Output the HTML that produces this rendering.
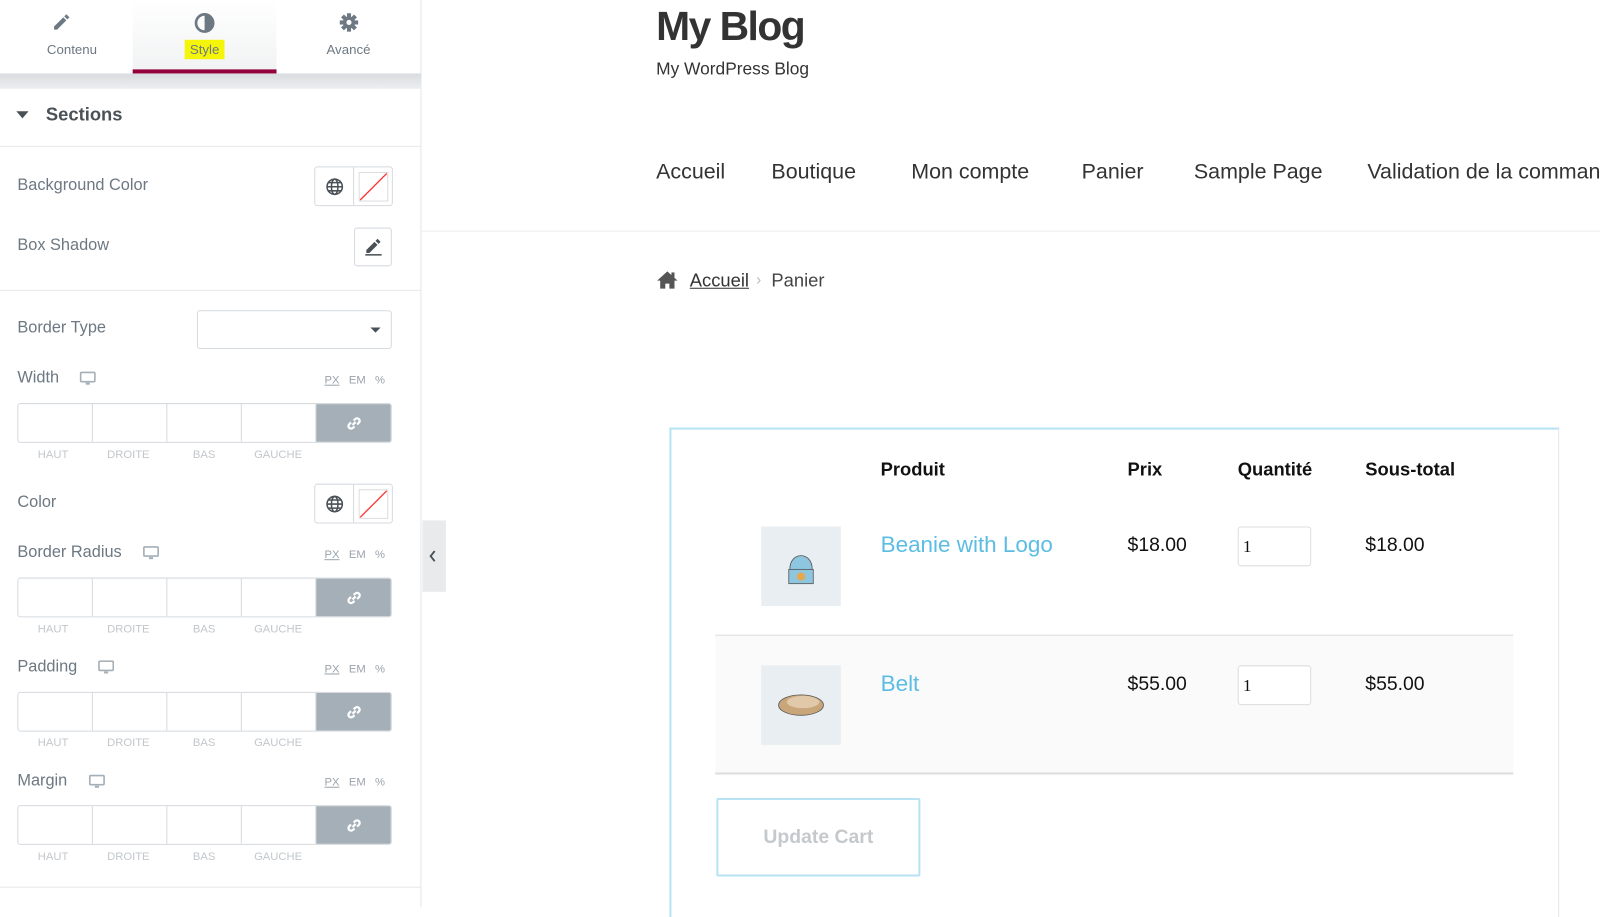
<!DOCTYPE html>
<html><head><meta charset="utf-8"><style>
*{box-sizing:border-box;margin:0;padding:0}
body{width:1600px;height:889px;overflow:hidden;background:#fff;font-family:"Liberation Sans",sans-serif;position:relative}
#w{position:absolute;left:0;top:0;width:1568px;height:872px;transform:scale(1.0204);transform-origin:0 0}
.a{position:absolute}
.side{left:0;top:0;width:413px;height:889px;background:#fff;border-right:1px solid #e3e5e8}
.tab{top:0;width:141px;height:72px;text-align:center;color:#6d7882;font-size:13px}
.tab .lb{position:absolute;top:41px;left:0;right:0}
.lbl{color:#6d7882;font-size:16px}
.hr{height:1px;background:#e6e8ea;left:0;width:413px}
.dim{left:17px;width:367px;height:39px;border:1px solid #d5dadf;border-radius:3px;display:flex;overflow:hidden}
.dim div{flex:1;border-right:1px solid #d5dadf}
.dim .lk{flex:0 0 73px;background:#a4afb7;border:none;display:flex;align-items:center;justify-content:center}
.sub{font-size:11px;color:#c2c7cc}
.unit{font-size:11px;color:#9aa3ab}
.gb{width:77px;height:39px;border:1px solid #d5dadf;border-radius:3px;display:flex}
.gb div{flex:1;display:flex;align-items:center;justify-content:center}
.nav{top:157px;font-size:21px;color:#333;white-space:nowrap}
.th{top:450px;font-size:18px;font-weight:bold;color:#111}
.td{font-size:19px;color:#111}
.qty{width:72px;height:39px;border:1px solid #ddd;border-radius:3px;font-family:"Liberation Serif",serif;font-size:17px;padding:9px 0 0 4px;color:#111;background:#fff}
</style></head><body><div id="w">
<div class="a side"></div>
<div class="a tab" style="left:0"><svg class="a" style="left:51px;top:13px" width="18" height="18" viewBox="0 0 18 18"><path d="M2 13l9-9 3 3-9 9H2z M12 3l2-2 3 3-2 2z" fill="#6d7882"/></svg><div class="lb">Contenu</div></div>
<div class="a tab" style="left:130px;background:linear-gradient(#fff,#f1f2f3)"><svg class="a" style="left:60px;top:12px" width="21" height="21" viewBox="0 0 20 20"><circle cx="10" cy="10" r="8" fill="none" stroke="#6d7882" stroke-width="2.5"/><path d="M10 2a8 8 0 0 1 0 16z" fill="#6d7882"/></svg><div class="lb"><span style="background:#f5f50a;padding:2px 5px;color:#6d7882">Style</span></div></div>
<div class="a" style="left:130px;top:68px;width:141px;height:4px;background:#93003c"></div>
<div class="a tab" style="left:271px"><svg class="a" style="left:61px;top:12px" width="20" height="20" viewBox="0 0 20 20"><g fill="#6d7882"><circle cx="10" cy="10" r="6"/><rect x="8" y="1" width="4" height="18"/><rect x="1" y="8" width="18" height="4"/><rect x="8" y="1" width="4" height="18" transform="rotate(45 10 10)"/><rect x="8" y="1" width="4" height="18" transform="rotate(-45 10 10)"/></g><circle cx="10" cy="10" r="2.5" fill="#fff"/></svg><div class="lb">Avancé</div></div>
<div class="a" style="left:0;top:72px;width:413px;height:15px;background:linear-gradient(#d9dcdf,#eceeef)"></div>
<div class="a" style="left:16px;top:109px;width:0;height:0;border-left:6px solid transparent;border-right:6px solid transparent;border-top:7px solid #495157"></div>
<div class="a" style="left:45px;top:102px;font-size:18px;font-weight:bold;color:#495157">Sections</div>
<div class="a hr" style="top:143px"></div>
<div class="a lbl" style="left:17px;top:173px">Background Color</div>
<div class="a gb" style="left:308px;top:163px"><div style="border-right:1px solid #d5dadf"><svg width="18" height="18" viewBox="0 0 18 18" fill="none" stroke="#495157" stroke-width="1.5"><circle cx="9" cy="9" r="7.5"/><ellipse cx="9" cy="9" rx="3.2" ry="7.5"/><path d="M1.5 9h15M2.8 5h12.4M2.8 13h12.4"/></svg></div><div><svg width="30" height="30"><rect x="1" y="1" width="28" height="28" fill="none" stroke="#ddd"/><path d="M2 28L28 2" stroke="#f33" stroke-width="1.3"/></svg></div></div>
<div class="a lbl" style="left:17px;top:232px">Box Shadow</div>
<div class="a" style="left:347px;top:223px;width:37px;height:38px;border:1px solid #d5dadf;border-radius:3px"><svg class="a" style="left:9px;top:8px" width="18" height="20" viewBox="0 0 18 20"><path d="M2 13l8-8 3 3-8 8H2z M11 4l2-2 3 3-2 2z" fill="#495157"/><rect x="1" y="17" width="16" height="1.5" fill="#495157"/></svg></div>
<div class="a hr" style="top:284px"></div>
<div class="a lbl" style="left:17px;top:313px">Border Type</div>
<div class="a" style="left:193px;top:304px;width:191px;height:38px;border:1px solid #d5dadf;border-radius:3px"><div class="a" style="left:169px;top:16px;border-left:5px solid transparent;border-right:5px solid transparent;border-top:5px solid #495157"></div></div>

<div class="a lbl" style="left:17px;top:362px">Width</div>
<svg class="a" style="left:78px;top:364px" width="16" height="14" viewBox="0 0 16 14"><rect x="1" y="1" width="14" height="9" rx="1" fill="none" stroke="#a4afb7" stroke-width="1.6"/><rect x="6" y="11" width="4" height="2" fill="#a4afb7"/></svg>
<div class="a unit" style="left:318px;top:367px"><u>PX</u>&nbsp;&nbsp;&nbsp;EM&nbsp;&nbsp;&nbsp;%</div>
<div class="a dim" style="top:395px"><div></div><div></div><div></div><div></div><div class="lk"><svg width="18" height="18" viewBox="0 0 18 18" fill="none" stroke="#fff" stroke-width="2.2"><path d="M7.5 10.5l3-3M6 8L4 10a2.5 2.5 0 0 0 3.5 3.5L9.5 12M12 10l2-2a2.5 2.5 0 0 0-3.5-3.5L8.5 6"/></svg></div></div>
<div class="a sub" style="left:37px;top:440px">HAUT</div><div class="a sub" style="left:105px;top:440px">DROITE</div><div class="a sub" style="left:189px;top:440px">BAS</div><div class="a sub" style="left:249px;top:440px">GAUCHE</div>

<div class="a lbl" style="left:17px;top:484px">Color</div>
<div class="a gb" style="left:308px;top:474px"><div style="border-right:1px solid #d5dadf"><svg width="18" height="18" viewBox="0 0 18 18" fill="none" stroke="#495157" stroke-width="1.5"><circle cx="9" cy="9" r="7.5"/><ellipse cx="9" cy="9" rx="3.2" ry="7.5"/><path d="M1.5 9h15M2.8 5h12.4M2.8 13h12.4"/></svg></div><div><svg width="30" height="30"><rect x="1" y="1" width="28" height="28" fill="none" stroke="#ddd"/><path d="M2 28L28 2" stroke="#f33" stroke-width="1.3"/></svg></div></div>

<div class="a lbl" style="left:17px;top:533px">Border Radius</div>
<svg class="a" style="left:140px;top:535px" width="16" height="14" viewBox="0 0 16 14"><rect x="1" y="1" width="14" height="9" rx="1" fill="none" stroke="#a4afb7" stroke-width="1.6"/><rect x="6" y="11" width="4" height="2" fill="#a4afb7"/></svg>
<div class="a unit" style="left:318px;top:538px"><u>PX</u>&nbsp;&nbsp;&nbsp;EM&nbsp;&nbsp;&nbsp;%</div>
<div class="a dim" style="top:566px"><div></div><div></div><div></div><div></div><div class="lk"><svg width="18" height="18" viewBox="0 0 18 18" fill="none" stroke="#fff" stroke-width="2.2"><path d="M7.5 10.5l3-3M6 8L4 10a2.5 2.5 0 0 0 3.5 3.5L9.5 12M12 10l2-2a2.5 2.5 0 0 0-3.5-3.5L8.5 6"/></svg></div></div>
<div class="a sub" style="left:37px;top:611px">HAUT</div><div class="a sub" style="left:105px;top:611px">DROITE</div><div class="a sub" style="left:189px;top:611px">BAS</div><div class="a sub" style="left:249px;top:611px">GAUCHE</div>

<div class="a lbl" style="left:17px;top:645px">Padding</div>
<svg class="a" style="left:96px;top:647px" width="16" height="14" viewBox="0 0 16 14"><rect x="1" y="1" width="14" height="9" rx="1" fill="none" stroke="#a4afb7" stroke-width="1.6"/><rect x="6" y="11" width="4" height="2" fill="#a4afb7"/></svg>
<div class="a unit" style="left:318px;top:650px"><u>PX</u>&nbsp;&nbsp;&nbsp;EM&nbsp;&nbsp;&nbsp;%</div>
<div class="a dim" style="top:678px"><div></div><div></div><div></div><div></div><div class="lk"><svg width="18" height="18" viewBox="0 0 18 18" fill="none" stroke="#fff" stroke-width="2.2"><path d="M7.5 10.5l3-3M6 8L4 10a2.5 2.5 0 0 0 3.5 3.5L9.5 12M12 10l2-2a2.5 2.5 0 0 0-3.5-3.5L8.5 6"/></svg></div></div>
<div class="a sub" style="left:37px;top:722px">HAUT</div><div class="a sub" style="left:105px;top:722px">DROITE</div><div class="a sub" style="left:189px;top:722px">BAS</div><div class="a sub" style="left:249px;top:722px">GAUCHE</div>

<div class="a lbl" style="left:17px;top:757px">Margin</div>
<svg class="a" style="left:87px;top:759px" width="16" height="14" viewBox="0 0 16 14"><rect x="1" y="1" width="14" height="9" rx="1" fill="none" stroke="#a4afb7" stroke-width="1.6"/><rect x="6" y="11" width="4" height="2" fill="#a4afb7"/></svg>
<div class="a unit" style="left:318px;top:761px"><u>PX</u>&nbsp;&nbsp;&nbsp;EM&nbsp;&nbsp;&nbsp;%</div>
<div class="a dim" style="top:789px"><div></div><div></div><div></div><div></div><div class="lk"><svg width="18" height="18" viewBox="0 0 18 18" fill="none" stroke="#fff" stroke-width="2.2"><path d="M7.5 10.5l3-3M6 8L4 10a2.5 2.5 0 0 0 3.5 3.5L9.5 12M12 10l2-2a2.5 2.5 0 0 0-3.5-3.5L8.5 6"/></svg></div></div>
<div class="a sub" style="left:37px;top:834px">HAUT</div><div class="a sub" style="left:105px;top:834px">DROITE</div><div class="a sub" style="left:189px;top:834px">BAS</div><div class="a sub" style="left:249px;top:834px">GAUCHE</div>
<div class="a hr" style="top:869px"></div>

<div class="a" style="left:414px;top:510px;width:23px;height:70px;background:#e8eaec"><svg class="a" style="left:6px;top:29px" width="8" height="12" viewBox="0 0 8 12"><path d="M6 1L2 6l4 5" fill="none" stroke="#495157" stroke-width="1.8"/></svg></div>

<div class="a" style="left:643px;top:4px;font-size:40px;font-weight:bold;color:#333;letter-spacing:-1.5px">My Blog</div>
<div class="a" style="left:643px;top:58px;font-size:17px;color:#333">My WordPress Blog</div>
<div class="a nav" style="left:643px">Accueil</div>
<div class="a nav" style="left:756px">Boutique</div>
<div class="a nav" style="left:893px">Mon compte</div>
<div class="a nav" style="left:1060px">Panier</div>
<div class="a nav" style="left:1170px">Sample Page</div>
<div class="a nav" style="left:1340px">Validation de la commande</div>
<div class="a" style="left:413px;top:226px;width:1187px;height:1px;background:#eee"></div>
<svg class="a" style="left:643px;top:265px" width="22" height="18" viewBox="0 0 22 18"><path d="M11 1L1 10h3v8h5v-5h4v5h5v-8h3z" fill="#555"/><rect x="15" y="2" width="3" height="5" fill="#555"/></svg>
<div class="a" style="left:676px;top:265px;font-size:18px;color:#333;text-decoration:underline">Accueil</div>
<div class="a" style="left:741px;top:266px;font-size:15px;color:#bbb">›</div>
<div class="a" style="left:756px;top:265px;font-size:18px;color:#444">Panier</div>

<div class="a" style="left:656px;top:419px;width:872px;height:480px;border:2px solid #b7e3f5;border-right:1px solid #e6e6e6;border-bottom:none"></div>
<div class="a th" style="left:863px">Produit</div>
<div class="a th" style="left:1105px">Prix</div>
<div class="a th" style="left:1213px">Quantité</div>
<div class="a th" style="left:1338px">Sous-total</div>
<div class="a" style="left:746px;top:516px;width:78px;height:78px;background:#e9eef2"><svg class="a" style="left:22px;top:18px" width="34" height="42" viewBox="0 0 34 42"><path d="M6 24C6 6 28 6 28 24z" fill="#8ec6e0" stroke="#555" stroke-width=".8"/><rect x="5" y="24" width="24" height="14" fill="#8ec6e0" stroke="#555" stroke-width=".8"/><circle cx="17" cy="31" r="4" fill="#e7a84b"/></svg></div>
<div class="a" style="left:863px;top:521px;font-size:22px;color:#5bbde4">Beanie with Logo</div>
<div class="a td" style="left:1105px;top:524px">$18.00</div>
<div class="a qty" style="left:1213px;top:516px">1</div>
<div class="a td" style="left:1338px;top:524px">$18.00</div>
<div class="a" style="left:701px;top:622px;width:782px;height:137px;background:#fafafa;border-top:1px solid #ddd;border-bottom:2px solid #ddd"></div>
<div class="a" style="left:746px;top:652px;width:78px;height:78px;background:#e9eef2"><svg class="a" style="left:14px;top:24px" width="50" height="30" viewBox="0 0 50 30"><ellipse cx="25" cy="15" rx="22" ry="10" fill="#c9a57a" stroke="#555" stroke-width=".8"/><ellipse cx="27" cy="12" rx="16" ry="6" fill="#e0c8a8"/></svg></div>
<div class="a" style="left:863px;top:657px;font-size:22px;color:#5bbde4">Belt</div>
<div class="a td" style="left:1105px;top:660px">$55.00</div>
<div class="a qty" style="left:1213px;top:652px">1</div>
<div class="a td" style="left:1338px;top:660px">$55.00</div>
<div class="a" style="left:702px;top:782px;width:200px;height:77px;border:2px solid #b7e3f5;border-radius:2px;text-align:center;line-height:73px;font-size:19px;font-weight:bold;color:#c5c9cc">Update Cart</div>
</div></body></html>
